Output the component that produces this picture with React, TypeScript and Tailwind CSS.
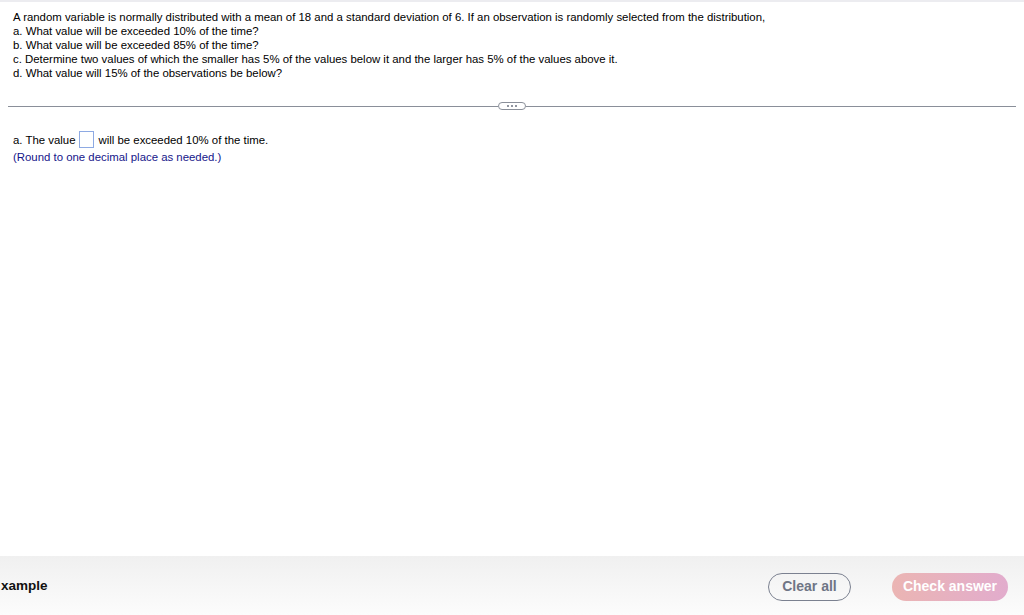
export default function App() {
  return (
    <main
      className="flex h-[615px] w-[1024px] flex-col bg-white text-black"
      style={{ fontFamily: '"Liberation Sans", Arial, sans-serif' }}
    >
      <div className="h-[2px] w-full bg-[#ececf0]" />

      <section className="px-[13px] pt-[8px] text-[11.4px] leading-[14px]">
        <p>
          A random variable is normally distributed with a mean of 18 and a standard deviation of 6. If an observation is
          randomly selected from the distribution,
        </p>
        <p>a. What value will be exceeded 10% of the time?</p>
        <p>b. What value will be exceeded 85% of the time?</p>
        <p>c. Determine two values of which the smaller has 5% of the values below it and the larger has 5% of the values above it.</p>
        <p>d. What value will 15% of the observations be below?</p>
      </section>

      <div className="mx-[8px] mt-[22px] flex items-center">
        <div className="h-px flex-1 bg-[#8a8f99]" />
        <button
          type="button"
          className="flex h-[8px] w-[28px] items-center justify-center gap-[2px] rounded-full border border-[#8a8f99] bg-white"
        >
          <span className="h-[2px] w-[2px] rounded-full bg-[#6b7280]" />
          <span className="h-[2px] w-[2px] rounded-full bg-[#6b7280]" />
          <span className="h-[2px] w-[2px] rounded-full bg-[#6b7280]" />
        </button>
        <div className="h-px flex-1 bg-[#8a8f99]" />
      </div>

      <section className="px-[13px] pt-[21px] text-[11.4px] leading-[14px]">
        <div className="flex items-center">
          <span>a. The value</span>
          <span className="mx-[4px] inline-block h-[17px] w-[15px] border border-[#8eaae3] bg-white" />
          <span>will be exceeded 10% of the time.</span>
        </div>
        <p className="mt-[2px] text-[#15158a]">(Round to one decimal place as needed.)</p>
      </section>

      <div className="flex-1" />

      <footer className="flex h-[59px] items-center bg-gradient-to-b from-[#f0f0f0] to-[#fcfcfc] pr-[16px] pt-[2px]">
        <span className="ml-[1px] text-[13.5px] font-bold text-[#111]">xample</span>
        <div className="flex-1" />
        <button
          type="button"
          className="h-[28px] w-[83px] rounded-full border-[1.5px] border-[#7b8190] text-[14px] font-bold text-[#6f7585]"
        >
          Clear all
        </button>
        <button
          type="button"
          className="ml-[41px] h-[28px] w-[116px] rounded-full bg-gradient-to-r from-[#ebb5b3] to-[#e2accd] text-[14px] font-bold text-white"
        >
          Check answer
        </button>
      </footer>
    </main>
  );
}
